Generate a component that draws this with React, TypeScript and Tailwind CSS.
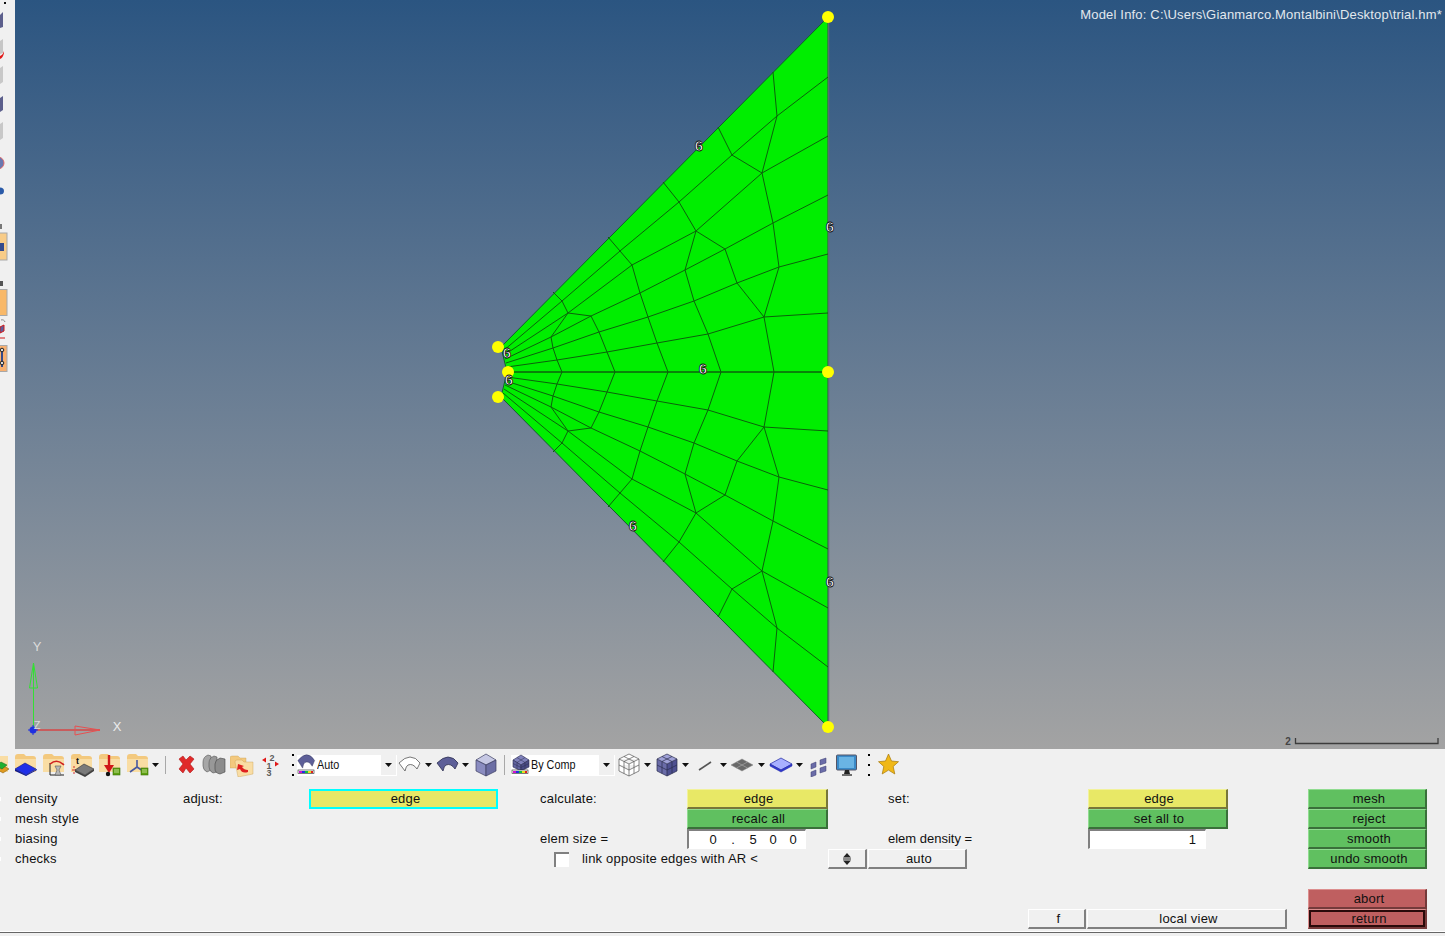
import type { ReactNode } from 'react'

type Pt = [number, number]

const FONT = { fontFamily: '"Liberation Sans", Arial, sans-serif' }

// mesh of the upper half, the lower half is mirrored about y = 372
const MESH: Pt[][] = [
  [[503, 351], [562, 301], [620, 251], [679, 202], [732, 155], [777, 116], [828, 77]],
  [[504, 355], [568, 313], [632, 265], [696, 231], [762, 173], [828, 136]],
  [[505, 359], [551, 337], [591, 316], [640, 293], [685, 270], [725, 249], [773, 223], [828, 195]],
  [[506, 363], [553, 348], [599, 332], [648, 317], [694, 301], [737, 283], [779, 267], [828, 254]],
  [[507, 367], [557, 360], [607, 352], [657, 343], [708, 334], [764, 317], [828, 313]],
  [[507, 372], [828, 372]],
  [[553, 292], [562, 301], [568, 313], [551, 337], [553, 348], [557, 360], [562, 372]],
  [[568, 313], [591, 316], [599, 332], [607, 352], [615, 372]],
  [[608, 237], [620, 251], [632, 265], [640, 293], [648, 317], [657, 343], [668, 372]],
  [[663, 182], [679, 202], [696, 231], [685, 270], [694, 301], [708, 334], [721, 372]],
  [[718, 127], [732, 155], [762, 173]],
  [[696, 231], [725, 249], [737, 283], [764, 317]],
  [[773, 72], [777, 116], [762, 173], [773, 223], [779, 267], [764, 317], [774, 372]],
]

const NODES: Pt[] = [[828, 17], [498, 347], [508, 372], [498, 397], [828, 372], [828, 727]]
const SIXES: Pt[] = [[699, 150], [830, 231], [507, 357], [509, 384], [703, 373], [633, 530], [830, 586]]

const toPoints = (pts: Pt[], mirror = false) =>
  pts.map(([x, y]) => `${x},${mirror ? 744 - y : y}`).join(' ')

function MeshView() {
  return (
    <svg className="absolute inset-0" width="1430" height="749" viewBox="15 0 1430 749">
      <polygon points="828,17 501,347 507,372 501,397 828,727" fill="#00ee00" stroke="#10602a" strokeWidth="1" />
      <line x1="828.5" y1="17" x2="828.5" y2="727" stroke="#5b6b70" strokeWidth="1.5" />
      {MESH.map((row, i) => (
        <g key={i} fill="none" stroke="#0c600c" strokeWidth="1">
          <polyline points={toPoints(row)} />
          <polyline points={toPoints(row, true)} />
        </g>
      ))}
      {NODES.map(([x, y], i) => <circle key={i} cx={x} cy={y} r="6" fill="#ffff00" />)}
      {SIXES.map(([x, y], i) => (
        <text key={i} x={x} y={y + 0.5} textAnchor="middle" fontSize="15" fontWeight="700" fontFamily="Liberation Sans" fill="#ffffff" stroke="#111" strokeWidth="0.8">6</text>
      ))}

      {/* triad */}
      <line x1="33.5" y1="665" x2="33.5" y2="730" stroke="#33e033" />
      <polygon points="33.5,663 29.5,688 37.5,688" fill="none" stroke="#33e033" />
      <line x1="33" y1="730" x2="100" y2="730" stroke="#f01818" />
      <polygon points="100,730 75,726 75,735" fill="none" stroke="#e85050" />
      <circle cx="33" cy="730" r="3.5" fill="#2030e0" />
      <path d="M33 725v10M28 730h10" stroke="#2030e0" />
      <text x="37" y="651" textAnchor="middle" fontSize="13" fontFamily="Liberation Sans" fill="#dcdcdc">Y</text>
      <text x="37" y="729" textAnchor="middle" fontSize="11" fontFamily="Liberation Sans" fill="#dcdcdc">Z</text>
      <text x="117" y="731" textAnchor="middle" fontSize="13" fontFamily="Liberation Sans" fill="#ececec">X</text>

      {/* scale */}
      <text x="1288" y="745" textAnchor="middle" fontSize="10" fontWeight="700" fontFamily="Liberation Sans" fill="#444">2</text>
      <path d="M1295.5 738v5.5h142.5v-5.5" fill="none" stroke="#3c3c3c" strokeWidth="1.3" />
    </svg>
  )
}

function SideStrip() {
  return (
    <svg width="15" height="749" viewBox="0 0 15 749" className="shrink-0">
      <rect x="4" y="2" width="2" height="2" fill="#111" />
      <path d="M0 15l3-3v15l-3 1z" fill="#5c5f8c" />
      <path d="M0 41l3-2v14l-3 1z" fill="#c6c6c6" />
      <path d="M0 56q3-1 4-5l0 2q-1 5-4 6z" fill="#e01818" />
      <path d="M0 68l3-2v16l-3 2z" fill="#c8c8c8" />
      <path d="M0 98l3-2v14l-3 2z" fill="#5c5f8c" />
      <path d="M0 124l3-2v16l-3 2z" fill="#c8c8c8" />
      <circle cx="-2" cy="163" r="6" fill="#6a78b0" stroke="#e06a6a" />
      <ellipse cx="0" cy="191" rx="4" ry="3.5" fill="#2a5aa8" />
      <rect x="0" y="224" width="2" height="5" fill="#777" />
      <rect x="-2" y="233" width="9" height="27" fill="#f8cc88" stroke="#a8a8a8" />
      <rect x="0" y="243" width="4" height="8" fill="#334a8c" />
      <rect x="0" y="281" width="3" height="5" fill="#555" />
      <rect x="-2" y="289.5" width="9" height="26" fill="#f8b868" stroke="#a8a8a8" />
      <path d="M0 327l4-2v6l-4 2zM0 338h5" stroke="#d01818" strokeWidth="1" fill="#5c5f9c" />
      <path d="M1 320a3 3 0 0 1 4 2" stroke="#888" fill="none" />
      <rect x="-2" y="345.5" width="9" height="26" fill="#f8b070" stroke="#a8a8a8" />
      <path d="M2 350v17" stroke="#334a8c" strokeWidth="2" />
      <circle cx="2" cy="350" r="1.8" fill="#ddd" stroke="#222" />
      <circle cx="2" cy="363" r="1.8" fill="#ddd" stroke="#222" />
    </svg>
  )
}

function Svg({ w = 24, children, className = '' }: { w?: number; children: ReactNode; className?: string }) {
  return <svg width={w} height="24" viewBox={`0 0 ${w} 24`} className={`shrink-0 ${className}`}>{children}</svg>
}

function Folder() {
  return (
    <>
      <path d="M1 4q0-3 3-3h6l2 2h7q3 0 3 3v13H1z" fill="#f3c97e" />
      <path d="M1 6h21v13H1z" fill="#f9dda4" />
    </>
  )
}

function Caret({ className = '' }: { className?: string }) {
  return (
    <svg width="7" height="4" viewBox="0 0 7 4" className={`shrink-0 ${className}`}>
      <path d="M0 0h7L3.5 4z" fill="#111" />
    </svg>
  )
}

function GreenList() {
  return (
    <>
      <rect x="15" y="15" width="7" height="7" fill="#5da010" stroke="#3a7008" strokeWidth="0.6" />
      <path d="M16 17h5M16 19h5" stroke="#d8eab0" strokeWidth="0.8" />
    </>
  )
}

function DottedSep({ className = '' }: { className?: string }) {
  return (
    <div className={`flex flex-col justify-between h-[22px] w-[2px] shrink-0 ${className}`}>
      <span className="w-[2px] h-[2px] bg-black" />
      <span className="w-[2px] h-[2px] bg-black" />
      <span className="w-[2px] h-[2px] bg-black" />
    </div>
  )
}

function Rainbow({ x = 0 }: { x?: number }) {
  return (
    <g transform={`translate(${x} 0)`}>
      <rect x="0" y="17" width="16" height="3.5" fill="#fff" stroke="#222" strokeWidth="0.6" />
      <rect x="1" y="18" width="3" height="2" fill="#d010d0" />
      <rect x="4" y="18" width="3" height="2" fill="#2030e0" />
      <rect x="7" y="18" width="3" height="2" fill="#10c040" />
      <rect x="10" y="18" width="3" height="2" fill="#e8e020" />
      <rect x="13" y="18" width="2" height="2" fill="#e02020" />
    </g>
  )
}

function Combo({ label, width, icon }: { label: string; width: string; icon: ReactNode }) {
  return (
    <div className={`flex items-center h-[21px] bg-white shrink-0 ${width}`}>
      <Svg w={20} className="-mt-px">{icon}</Svg>
      <span className="flex-1 text-[12px] text-[#111] whitespace-nowrap scale-x-90 origin-left">{label}</span>
      <span className="flex items-center justify-center w-[15px] h-[20px] bg-[#f0f0f0] mr-px">
        <Caret />
      </span>
    </div>
  )
}

const SURF = 'M1 10Q7 4 12 4Q18 4 22 10L19 16Q15 10 10 12Q8 13 7 18Z'

function Toolbar() {
  return (
    <div className="flex items-center h-[40px] pb-[8px] overflow-hidden">
      {/* cut off at the left edge */}
      <Svg w={9} className="mt-px">
        <path d="M-8 2h16v16H-8z" fill="#f9dda4" />
        <path d="M-4 15l6-4 7 4-6 4z" fill="#e09a20" stroke="#7a5408" strokeWidth="0.5" />
        <path d="M-4 12l5-4 6 3-5 4z" fill="#20b030" stroke="#106018" strokeWidth="0.5" />
      </Svg>
      <Svg className="ml-[5px]">
        <Folder />
        <path d="M1 16l10-6 11 6-10 6z" fill="#2030e8" stroke="#101880" strokeWidth="0.6" />
        <path d="M1 16v2l11 5 11-6v-1l-11 6z" fill="#101a90" />
      </Svg>
      <Svg className="ml-[4px]">
        <Folder />
        <path d="M8 22V10M8 22h14" stroke="#222" strokeWidth="1" fill="none" />
        <path d="M8 11q7-6 14 1" stroke="#d02020" strokeWidth="1.5" fill="none" />
        <path d="M13 13h6l-2 4 2 5h-6l2-5z" fill="#b8b8b8" stroke="#555" strokeWidth="0.6" />
      </Svg>
      <Svg className="ml-[4px]">
        <Folder />
        <text x="6" y="11" fontSize="9" fontWeight="700" fontFamily="Liberation Sans" fill="#111">t</text>
        <path d="M4 13v2M4 19v2M2 17h4" stroke="#d01818" strokeWidth="0.9" />
        <path d="M5 17l9-6 10 5-9 6z" fill="#7a7a7a" stroke="#333" strokeWidth="0.6" />
        <path d="M5 17v2l10 5 9-6v-2l-9 6z" fill="#404040" />
      </Svg>
      <Svg className="ml-[4px]">
        <Folder />
        <path d="M11 2v11" stroke="#d01818" strokeWidth="2.4" />
        <path d="M6 12h10l-5 8z" fill="#d01818" />
        <circle cx="10" cy="21" r="2.2" fill="#111" />
        <GreenList />
      </Svg>
      <Svg className="ml-[4px]">
        <Folder />
        <path d="M11 14V7M11 14l-7 5M11 14l6 4" stroke="#4858a0" strokeWidth="1.6" fill="none" />
        <GreenList />
      </Svg>
      <Caret className="ml-[2px]" />
      <span className="w-px h-[18px] bg-[#a8a8a8] ml-[6px] shrink-0" />
      <Svg w={20} className="ml-[10px]">
        <path d="M3 6l4-3 3 4 4-4 4 3-4 5 4 5-4 4-4-5-3 5-4-4 4-5z" fill="#e02a2a" stroke="#b01818" strokeWidth="0.6" />
      </Svg>
      <Svg className="ml-[6px]">
        <path d="M1 9q0-5 5-7l3 1v14l-4 2q-4-2-4-6z" fill="#a6a6a6" stroke="#555" strokeWidth="0.6" />
        <path d="M7 10q0-5 5-7l3 1v15l-4 1q-4-2-4-6z" fill="#989898" stroke="#555" strokeWidth="0.6" />
        <path d="M13 11q0-4 5-6l5 1v13l-5 2q-5-1-5-5z" fill="#8c8c8c" stroke="#444" strokeWidth="0.6" />
      </Svg>
      <Svg className="ml-[4px]">
        <path d="M0 5q0-2 2-2h6l2 2h6v10H0z" fill="#f3c97e" stroke="#c8a050" strokeWidth="0.4" />
        <path d="M5 9q0-2 2-2h5l2 2h9v12L8 24z" fill="#f9dda4" stroke="#c8a050" strokeWidth="0.4" />
        <path d="M18 19q-6 2-8-3l-3 1 1-6 6 2-2 1q2 3 6 3z" fill="#e02020" />
      </Svg>
      <Svg w={18} className="ml-[8px]">
        <text x="10" y="8" textAnchor="middle" fontSize="9" fontWeight="700" fontFamily="Liberation Sans" fill="#5c5c5c">2</text>
        <text x="7" y="15.500" textAnchor="middle" fontSize="9" fontWeight="700" fontFamily="Liberation Sans" fill="#5c5c5c">1</text>
        <text x="7" y="23" textAnchor="middle" fontSize="9" fontWeight="700" fontFamily="Liberation Sans" fill="#5c5c5c">3</text>
        <path d="M0 7l4-2.500v5zM17 11l-4-2.500v5z" fill="#e01818" />
      </Svg>
      <DottedSep className="ml-[12px]" />
      <div className="ml-[3px]">
        <Combo
          label="Auto"
          width="w-[100px]"
          icon={
            <>
              <path d={SURF} fill="#5d5f98" stroke="#35375c" strokeWidth="0.5" transform="translate(0 -2) scale(0.8 0.95)" />
              <Rainbow x={1} />
            </>
          }
        />
      </div>
      <Svg className="ml-[1px]">
        <path d={SURF} fill="#fff" stroke="#555" strokeWidth="0.8" />
      </Svg>
      <Caret className="ml-[3px]" />
      <Svg className="ml-[4px]">
        <path d={SURF} fill="#5d5f98" stroke="#2c2e50" strokeWidth="0.8" />
      </Svg>
      <Caret className="ml-[2px]" />
      <Svg className="ml-[5px]">
        <path d="M2 7l10-6 10 6-10 5z" fill="#c6c8e4" stroke="#3c3e60" strokeWidth="0.7" />
        <path d="M2 7v11l10 5V12z" fill="#8a8cc0" stroke="#3c3e60" strokeWidth="0.7" />
        <path d="M22 7v11l-10 5V12z" fill="#6c6ea4" stroke="#3c3e60" strokeWidth="0.7" />
      </Svg>
      <span className="w-px h-[20px] bg-[#a8a8a8] ml-[6px] shrink-0" />
      <div className="ml-[6px]">
        <Combo
          label="By Comp"
          width="w-[104px]"
          icon={
            <>
              <path d="M2 7l8-5 8 5-8 5z" fill="#8082bc" stroke="#2c2e50" strokeWidth="0.6" />
              <path d="M2 7v7l8 4V12z" fill="#6264a0" stroke="#2c2e50" strokeWidth="0.6" />
              <path d="M18 7v7l-8 4V12z" fill="#4a4c84" stroke="#2c2e50" strokeWidth="0.6" />
              <path d="M6 4.500l8 5M14 4.500l-8 5M2 10.500l8 4 8-4M6 9.500v6.500M14 9.500v6.500" stroke="#2c2e50" strokeWidth="0.5" fill="none" />
              <Rainbow x={1} />
            </>
          }
        />
      </div>
      <Svg className="ml-[2px]">
        <path d="M12 1l10 5v12l-10 5-10-5V6zM2 6l10 5 10-5M12 11v12M7 3.500l10 5M17 3.500l-10 5M2 12l10 5 10-5M7 8.500v12M17 8.500v12" fill="#fff" stroke="#555" strokeWidth="0.7" />
      </Svg>
      <Caret className="ml-[3px]" />
      <Svg className="ml-[4px]">
        <path d="M12 1l10 5-10 5L2 6z" fill="#a0a2d8" />
        <path d="M2 6l10 5v12L2 18z" fill="#6a6ca8" />
        <path d="M22 6l-10 5v12l10-5z" fill="#4e5090" />
        <path d="M12 1l10 5v12l-10 5-10-5V6zM2 6l10 5 10-5M12 11v12M7 3.500l10 5M17 3.500l-10 5M2 12l10 5 10-5M7 8.500v12M17 8.500v12" fill="none" stroke="#2a2c4c" strokeWidth="0.7" />
      </Svg>
      <Caret className="ml-[3px]" />
      <Svg w={16} className="ml-[8px]">
        <path d="M2 17L14 9" stroke="#555" strokeWidth="1.6" />
      </Svg>
      <Caret className="ml-[7px]" />
      <Svg className="ml-[3px]">
        <path d="M1 12l11-6 11 6-11 6z" fill="#6a6a6a" stroke="#888" strokeWidth="0.5" />
        <path d="M6.500 9l11 6M17.500 9l-11 6" stroke="#a8a8a8" strokeWidth="0.7" />
      </Svg>
      <Caret className="ml-[4px]" />
      <Svg className="ml-[4px]">
        <path d="M1 11l11-6 11 6-11 6z" fill="#a8b0ff" stroke="#2028a0" strokeWidth="0.7" />
        <path d="M1 11v2l11 6 11-6v-2l-11 6z" fill="#3038d0" stroke="#2028a0" strokeWidth="0.5" />
      </Svg>
      <Caret className="ml-[3px]" />
      <Svg w={18} className="ml-[7px]">
        <path d="M1 11l5-2v5l-5 2zM10 7l6-2v5l-6 2zM1 19l5-2v5l-5 2zM10 15l6-2v5l-6 2z" fill="#6a6ca8" stroke="#3c3e70" strokeWidth="0.5" />
      </Svg>
      <Svg w={21} className="ml-[8px]">
        <rect x="0.500" y="2" width="20" height="15" rx="1" fill="#3a8ac8" stroke="#556" />
        <path d="M3 4h15v11H3z" fill="#6ab4e4" />
        <path d="M8 21h6l-1-4H9z" fill="#222" />
        <path d="M6 22h10" stroke="#333" strokeWidth="1.4" />
      </Svg>
      <DottedSep className="ml-[11px]" />
      <Svg w={21} className="ml-[8px]">
        <path d="M10.500 1l3 7 7 .7-5.300 4.800 1.600 7.500-6.300-3.900L4.200 21l1.600-7.500L.5 8.700l7-.7z" fill="#f0b818" stroke="#a87808" strokeWidth="0.7" />
      </Svg>
    </div>
  )
}

function Bevel({ tone, pad = 'pl-1', className = '', children }: { tone: 'yellow' | 'green' | 'red' | 'grey'; pad?: string; className?: string; children: ReactNode }) {
  const toneClass = {
    yellow: 'bg-[#e8e866] border-t-[#f2f29c] border-l-[#f2f29c] border-r-[#77773a] border-b-[#77773a]',
    green: 'bg-[#60c060] border-t-[#90dc90] border-l-[#90dc90] border-r-[#3a703a] border-b-[#3a703a]',
    red: 'bg-[#bf5f60] border-t-[#dc8e8e] border-l-[#dc8e8e] border-r-[#743a3a] border-b-[#743a3a]',
    grey: 'bg-[#f0f0f0] border-t-white border-l-white border-r-[#808080] border-b-[#808080]',
  }[tone]
  return (
    <div className={`h-5 flex items-center justify-center border-t border-l border-r-2 border-b-2 text-[13px] tracking-[0.2px] text-[#111] whitespace-nowrap ${pad} ${toneClass} ${className}`}>
      {children}
    </div>
  )
}

function Label({ className = '', children }: { className?: string; children: ReactNode }) {
  return <div className={`h-5 flex items-center text-[13px] text-[#111] whitespace-nowrap ${className}`}>{children}</div>
}

function RadioLabel({ className, children }: { className: string; children: ReactNode }) {
  return (
    <Label className={`tracking-[0.2px] ${className}`}>
      <span className="w-px h-1 bg-white -ml-[15px] mr-[14px]" />
      {children}
    </Label>
  )
}

function Sunken({ className = '', children }: { className?: string; children: ReactNode }) {
  return (
    <div className={`h-5 flex items-center bg-white border-t-2 border-l-2 border-r border-b border-t-[#808080] border-l-[#808080] border-r-white border-b-white text-[13px] text-[#111] ${className}`}>
      {children}
    </div>
  )
}

function Panel() {
  return (
    <div className="flex-1 flex flex-col">
      <Toolbar />
      <div className="ml-[15px] grid grid-cols-[168px_126px_189px_42px_147px_141px_39px_21px_140px_59px_141px_59px_21px_119px] grid-rows-[repeat(7,20px)]">
        <RadioLabel className="col-start-1 row-start-1">density</RadioLabel>
        <RadioLabel className="col-start-1 row-start-2">mesh style</RadioLabel>
        <RadioLabel className="col-start-1 row-start-3">biasing</RadioLabel>
        <RadioLabel className="col-start-1 row-start-4">checks</RadioLabel>

        <Label className="col-start-2 row-start-1 tracking-[0.2px]">adjust:</Label>
        <div className="col-start-3 row-start-1 h-5 flex items-center justify-center pl-1 bg-[#e8e866] border-2 border-[#00ffff] text-[13px] tracking-[0.2px] text-[#111]">edge</div>

        <Label className="col-start-5 row-start-1 tracking-[0.2px]">calculate:</Label>
        <Bevel tone="yellow" pad="pl-[3px]" className="col-start-6 row-start-1">edge</Bevel>
        <Bevel tone="green" pad="pl-[3px]" className="col-start-6 row-start-2">recalc all</Bevel>
        <Label className="col-start-5 row-start-3 tracking-[0.2px]">elem size =</Label>
        <Sunken className="col-start-6 row-start-3 w-[119px] pl-[14px]">
          {['0', '.', '5', '0', '0'].map((c, i) => <span key={i} className="w-5 text-center">{c}</span>)}
        </Sunken>
        <Label className="col-start-5 col-span-2 row-start-4 tracking-[0.2px]">
          <span className="ml-[14px] w-[15px] h-[15px] bg-white border-t-2 border-l-2 border-[#808080] mr-[13px]" />
          link opposite edges with AR &lt;
        </Label>
        <Bevel tone="grey" pad="pl-0" className="col-start-7 row-start-4">
          <svg width="10" height="12" viewBox="0 0 10 12">
            <path d="M5 0l4 4.500H1zM5 12l4-4.500H1z" fill="#222" />
            <path d="M1 6h8" stroke="#222" />
          </svg>
        </Bevel>
        <Bevel tone="grey" className="col-start-8 col-span-2 row-start-4 w-[99px] ml-px">auto</Bevel>

        <Label className="col-start-9 row-start-1 tracking-[0.2px]">set:</Label>
        <Label className="col-start-9 row-start-3">elem density =</Label>
        <Bevel tone="yellow" pad="pl-[3px]" className="col-start-11 row-start-1 ml-px">edge</Bevel>
        <Bevel tone="green" pad="pl-[3px]" className="col-start-11 row-start-2 ml-px">set all to</Bevel>
        <Sunken className="col-start-11 row-start-3 ml-px w-[118px] justify-end pr-[9px]">1</Sunken>

        <Bevel tone="green" className="col-start-14 row-start-1">mesh</Bevel>
        <Bevel tone="green" className="col-start-14 row-start-2">reject</Bevel>
        <Bevel tone="green" className="col-start-14 row-start-3">smooth</Bevel>
        <Bevel tone="green" className="col-start-14 row-start-4">undo smooth</Bevel>
        <Bevel tone="red" className="col-start-14 row-start-6">abort</Bevel>
        <Bevel tone="red" pad="pl-0" className="col-start-14 row-start-7">
          <span className="h-[17px] w-full flex items-center justify-center pl-1 border-2 border-[#2a0a0a]">return</span>
        </Bevel>

        <Bevel tone="grey" className="col-start-10 row-start-7 w-[58px]">f</Bevel>
        <Bevel tone="grey" className="col-start-11 col-span-2 row-start-7">local view</Bevel>
      </div>
      <div className="h-px mt-[2px] bg-white" />
      <div className="flex-1 bg-[#f0f0f0] border-t border-t-[#666]" />
    </div>
  )
}

export default function App() {
  return (
    <div className="w-[1445px] h-[936px] flex flex-col overflow-hidden bg-[#f0f0f0]" style={FONT}>
      <div className="h-[749px] flex shrink-0">
        <SideStrip />
        <div className="flex-1 relative bg-linear-to-b from-[#2b5581] to-[#a3a3a3]">
          <MeshView />
          <div className="absolute top-[5px] right-[3px] text-[13px] tracking-[0.18px] text-[#e2e8ee] whitespace-nowrap">
            Model Info: C:\Users\Gianmarco.Montalbini\Desktop\trial.hm*
          </div>
        </div>
      </div>
      <Panel />
    </div>
  )
}
